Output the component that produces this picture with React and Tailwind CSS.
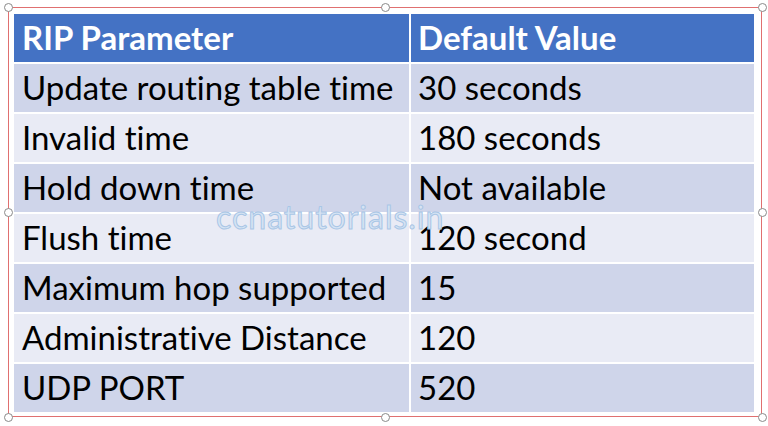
import React from "react";

const rows = [
  ["Update routing table time", "30 seconds"],
  ["Invalid time", "180 seconds"],
  ["Hold down time", "Not available"],
  ["Flush time", "120 second"],
  ["Maximum hop supported", "15"],
  ["Administrative Distance", "120"],
  ["UDP PORT", "520"],
];

function Handle({ className }) {
  return (
    <div
      className={`absolute w-[9px] h-[9px] rounded-full border border-[#8a8a8a] bg-white ${className}`}
    />
  );
}

export default function App() {
  return (
    <div
      className="relative w-[768px] h-[426px] bg-white overflow-hidden pt-[7px] pl-[8px] [font-variant-ligatures:none]"
      style={{ fontFamily: "Lato, 'Open Sans', sans-serif" }}
    >
      <div className="w-[754px] h-[410px] border border-[#e07070] pt-[6px] pl-[5px]">
        <div className="grid grid-cols-[395px_343px] gap-[2px] bg-white">
          <div className="bg-[#4472c4] h-[48px] flex items-center pl-[8px] text-white font-bold text-[33px]">
            RIP Parameter
          </div>
          <div className="bg-[#4472c4] h-[48px] flex items-center pl-[7px] text-white font-bold text-[33px]">
            Default Value
          </div>
          {rows.map((r, i) => (
            <React.Fragment key={i}>
              <div
                className={`h-[48px] flex items-center pl-[8px] text-black text-[33px] ${
                  i % 2 === 0 ? "bg-[#cfd5ea]" : "bg-[#e9ebf5]"
                }`}
              >
                {r[0]}
              </div>
              <div
                className={`h-[48px] flex items-center pl-[7px] text-black text-[33px] ${
                  i % 2 === 0 ? "bg-[#cfd5ea]" : "bg-[#e9ebf5]"
                }`}
              >
                {r[1]}
              </div>
            </React.Fragment>
          ))}
        </div>
      </div>

      <div className="absolute left-[216px] top-[193px] text-[32px] tracking-[1px] text-[#d6e4f4] [-webkit-text-stroke:1px_#a9c6e6]">
        ccnatutorials.in
      </div>

      <Handle className="left-[4px] top-[3px]" />
      <Handle className="left-[381px] top-[3px]" />
      <Handle className="left-[758px] top-[3px]" />
      <Handle className="left-[4px] top-[208px]" />
      <Handle className="left-[758px] top-[208px]" />
      <Handle className="left-[4px] top-[413px]" />
      <Handle className="left-[381px] top-[413px]" />
      <Handle className="left-[758px] top-[413px]" />
    </div>
  );
}
